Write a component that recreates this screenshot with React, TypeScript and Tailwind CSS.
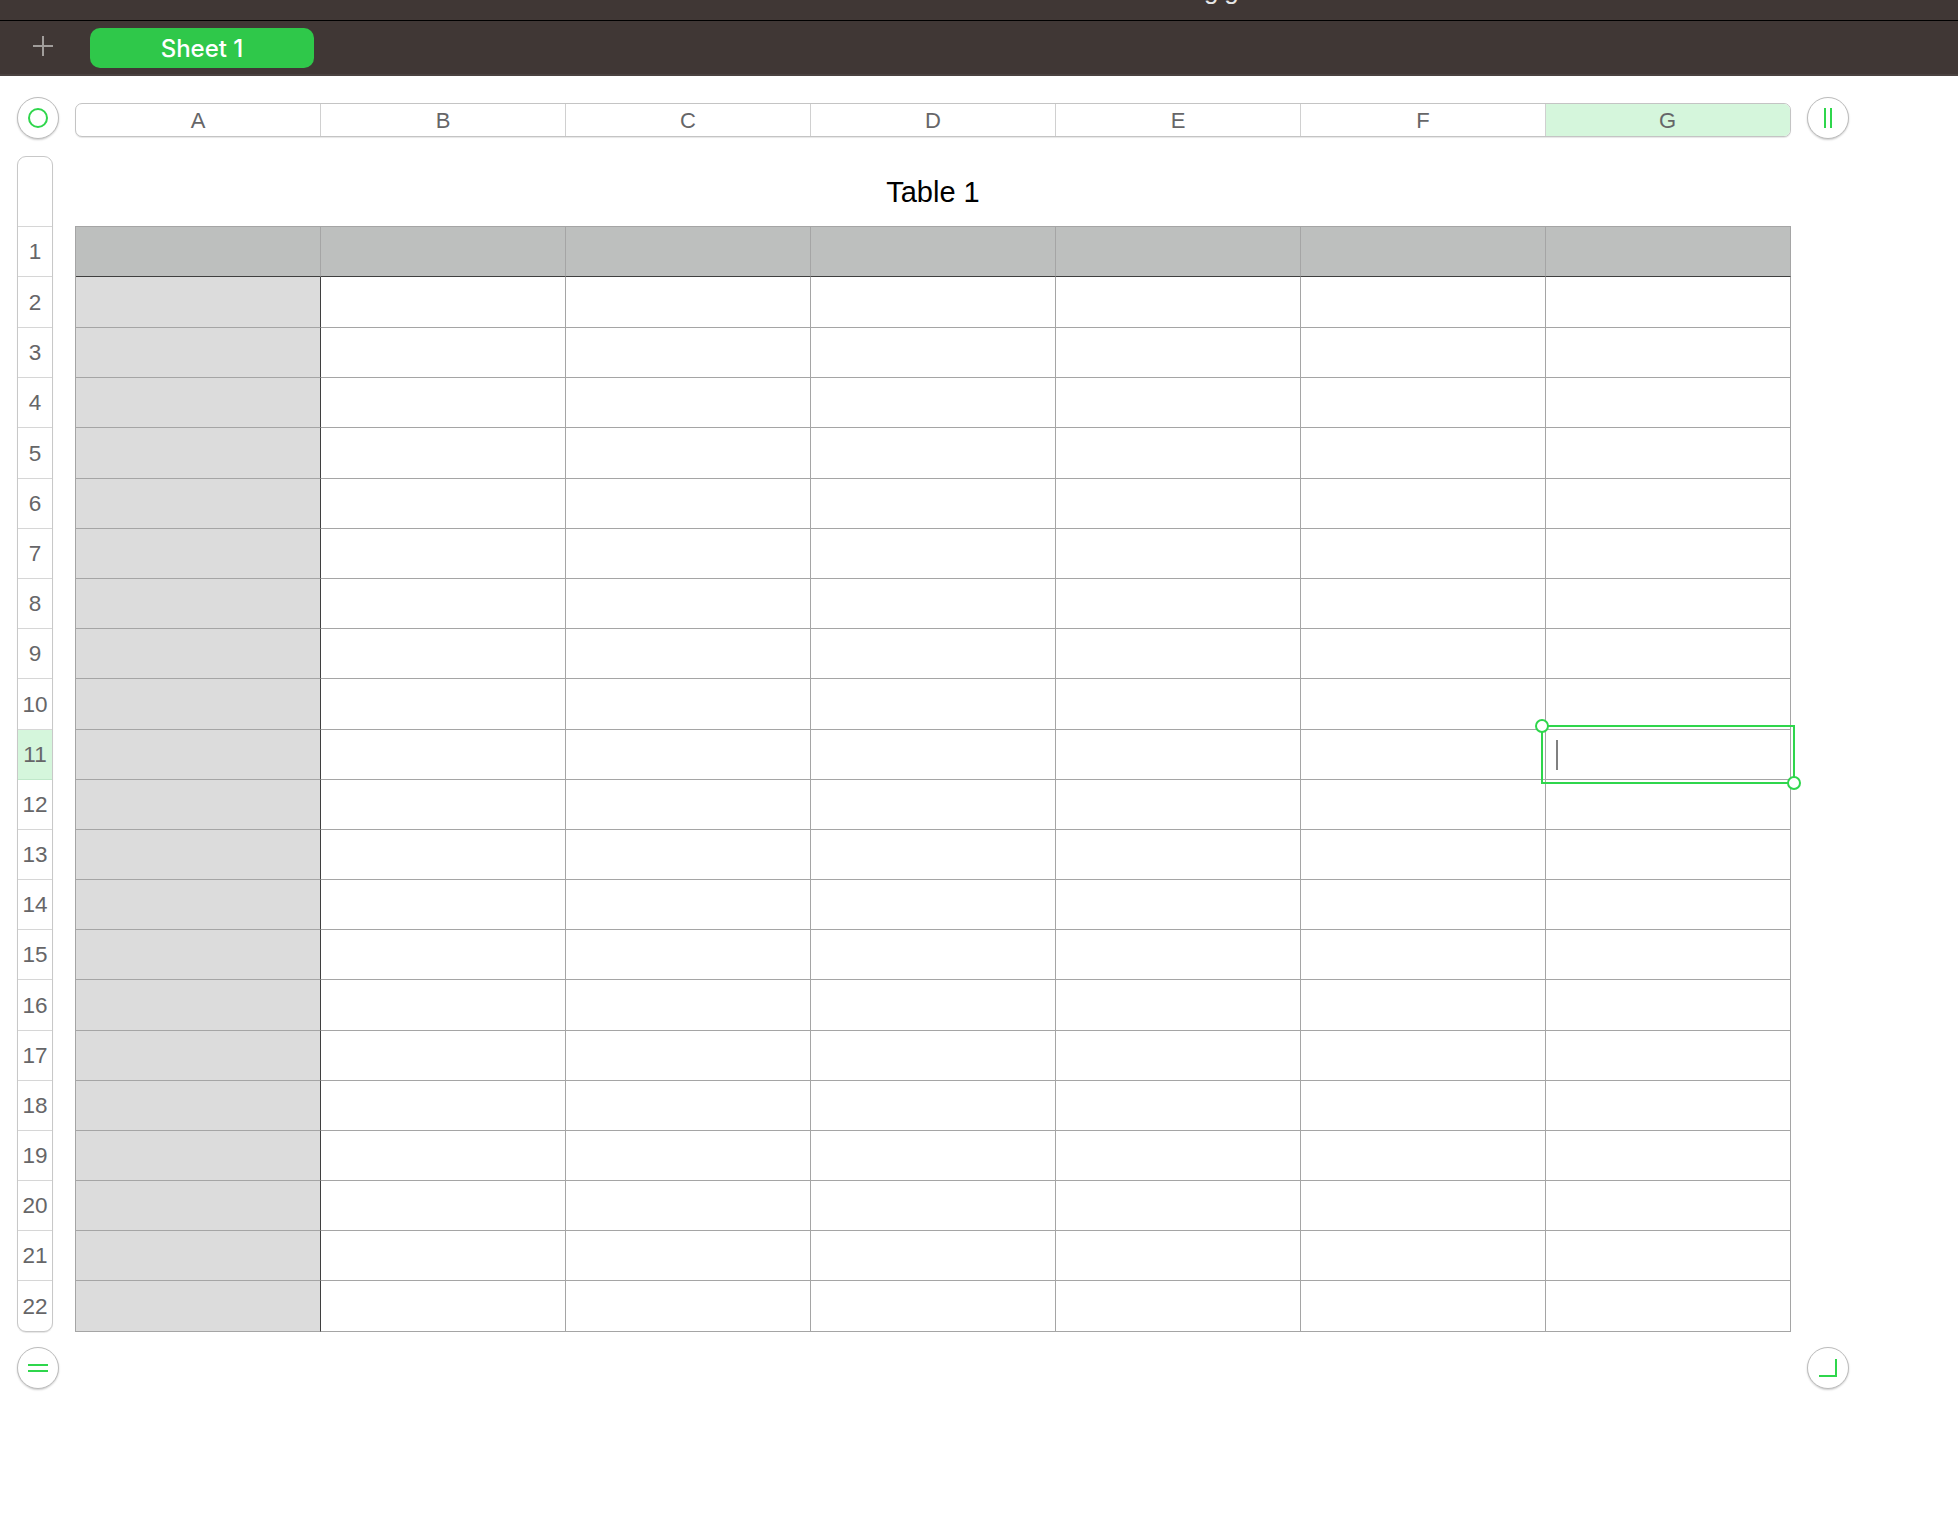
const columns = ["A", "B", "C", "D", "E", "F", "G"]
const rows = Array.from({ length: 22 }, (_, i) => i + 1)

function RoundButton({ children }: { children: React.ReactNode }) {
  return (
    <div className="w-[42px] h-[42px] shrink-0 rounded-full bg-white border border-[#bcbcbc] shadow-[0_1px_2px_rgba(0,0,0,0.2)] flex items-center justify-center">
      {children}
    </div>
  )
}

function Cell({ col, row }: { col: number; row: number }) {
  let bg = "bg-white"
  if (row === 0) bg = "bg-[#bdbfbe]"
  else if (col === 0) bg = "bg-[#dcdcdc]"

  const right = col === 0 && row > 0 ? "border-r border-r-[#3f3f3f]" : "border-r border-r-[#a5a5a5]"
  const bottom = row === 0 ? "border-b border-b-[#3f3f3f]" : "border-b border-b-[#a5a5a5]"

  return (
    <div className={`relative ${bg} ${right} ${bottom}`}>
      {col === 6 && row === 10 && (
        <div className="absolute -left-[5px] -top-[5px] -right-[5px] -bottom-[5px] border-2 border-[#2fd64c] z-10">
          <div className="absolute -left-[8px] -top-[8px] w-[14px] h-[14px] rounded-full bg-white border-2 border-[#2fd64c]" />
          <div className="absolute -right-[8px] -bottom-[8px] w-[14px] h-[14px] rounded-full bg-white border-2 border-[#2fd64c]" />
          <div className="absolute left-[13px] top-[13px] w-[2px] h-[30px] bg-[#808080]" />
        </div>
      )}
    </div>
  )
}

export default function App() {
  return (
    <div className="w-[1958px] h-[1524px] bg-white overflow-hidden font-['Liberation_Sans',sans-serif] text-[#666668]">
      <div className="h-[76px] bg-[#403735] border-b-2 border-b-[#4a4240]">
        <div className="h-[21px] border-b border-black overflow-hidden">
          <span className="block -mt-[25px] ml-[1149px] text-[26px] leading-[30px] text-[#e6e6e6] whitespace-nowrap">
            Sort gig – Edited
          </span>
        </div>
        <div className="flex items-center pl-[33px] pt-[7px]">
          <svg width="20" height="20" viewBox="0 0 20 20" className="mb-[4px]">
            <path d="M10 0v20M0 10h20" stroke="#a19d9b" strokeWidth="2" />
          </svg>
          <div className="ml-[37px] w-[224px] h-[40px] pt-[2px] rounded-[10px] bg-[#2fc84a] text-white text-[24px] font-medium font-['Inter',sans-serif] flex items-center justify-center">
            Sheet 1
          </div>
        </div>
      </div>

      <div className="pl-[17px] pt-[21px]">
        <div className="flex items-start gap-[16px]">
          <RoundButton>
            <div className="w-[20px] h-[20px] rounded-full border-2 border-[#2fd64c]" />
          </RoundButton>
          <div className="mt-[6px] w-[1716px] h-[34px] grid grid-cols-[repeat(7,245px)] bg-white border border-[#c4c4c4] rounded-[7px] overflow-hidden shadow-[0_1px_1px_rgba(0,0,0,0.1)]">
            {columns.map((c) => (
              <div
                key={c}
                className={`flex items-center justify-center text-[22px] ${c === "G" ? "bg-[#d5f6dc] pr-[2px]" : "border-r border-[#d0d0d0]"}`}
              >
                {c}
              </div>
            ))}
          </div>
          <RoundButton>
            <div className="flex gap-[4px]">
              <div className="w-[2px] h-[20px] bg-[#2fd64c]" />
              <div className="w-[2px] h-[20px] bg-[#2fd64c]" />
            </div>
          </RoundButton>
        </div>

        <div className="flex mt-[17px] gap-[22px]">
          <div className="w-[36px] h-[1176px] flex flex-col bg-white border border-[#c8c8c8] rounded-[9px] overflow-hidden shadow-[0_1px_1px_rgba(0,0,0,0.1)]">
            <div className="h-[70px] shrink-0 border-b border-[#d6d6d6]" />
            <div className="flex-1 grid grid-rows-[50px_51px_50px_50px_51px_50px_50px_50px_50px_51px_50px_50px_50px_50px_50px_51px_50px_50px_50px_50px_50px_50px]">
              {rows.map((r) => (
                <div
                  key={r}
                  className={`flex items-center justify-center pt-[1px] text-[22.5px] border-b last:border-b-0 ${r === 11 ? "bg-[#d5f6dc] border-[#c0e8ca]" : "border-[#d6d6d6]"}`}
                >
                  {r}
                </div>
              ))}
            </div>
          </div>

          <div className="w-[1716px] h-[1176px] flex flex-col">
            <div className="h-[70px] shrink-0 flex justify-center pt-[18px]">
              <span className="text-[29px] leading-[36px] text-black">Table 1</span>
            </div>
            <div className="flex-1 grid grid-cols-7 grid-rows-[50px_51px_50px_50px_51px_50px_50px_50px_50px_51px_50px_50px_50px_50px_50px_51px_50px_50px_50px_50px_50px_51px] border-t border-l border-[#a5a5a5]">
              {rows.map((_, r) =>
                columns.map((c, i) => <Cell key={c + r} col={i} row={r} />)
              )}
            </div>
          </div>
        </div>

        <div className="flex justify-between w-[1832px] mt-[15px]">
          <RoundButton>
            <div className="flex flex-col gap-[4px]">
              <div className="w-[20px] h-[2px] bg-[#2fd64c]" />
              <div className="w-[20px] h-[2px] bg-[#2fd64c]" />
            </div>
          </RoundButton>
          <RoundButton>
            <div className="w-[18px] h-[18px] border-r-2 border-b-2 border-[#2fd64c]" />
          </RoundButton>
        </div>
      </div>
    </div>
  )
}
